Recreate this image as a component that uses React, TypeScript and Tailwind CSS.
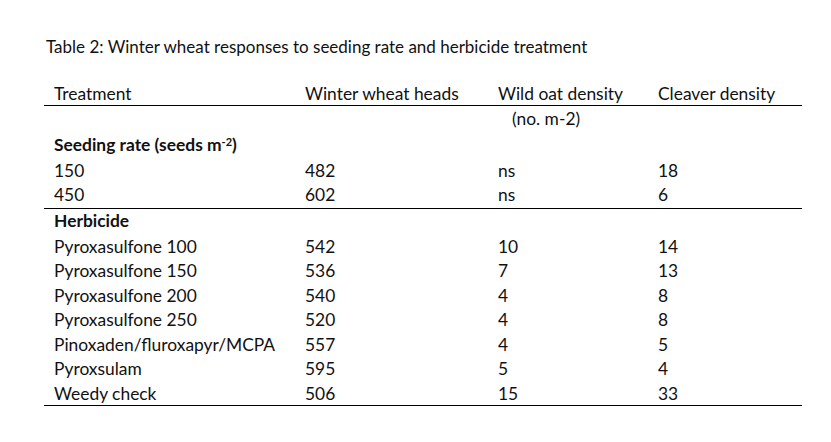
import React from 'react';

type Row = { name: string; heads: string; oat: string; cleaver: string };

const seeding: Row[] = [
  { name: '150', heads: '482', oat: 'ns', cleaver: '18' },
  { name: '450', heads: '602', oat: 'ns', cleaver: '6' },
];

const herbicide: Row[] = [
  { name: 'Pyroxasulfone 100', heads: '542', oat: '10', cleaver: '14' },
  { name: 'Pyroxasulfone 150', heads: '536', oat: '7', cleaver: '13' },
  { name: 'Pyroxasulfone 200', heads: '540', oat: '4', cleaver: '8' },
  { name: 'Pyroxasulfone 250', heads: '520', oat: '4', cleaver: '8' },
  { name: 'Pinoxaden/fluroxapyr/MCPA', heads: '557', oat: '4', cleaver: '5' },
  { name: 'Pyroxsulam', heads: '595', oat: '5', cleaver: '4' },
  { name: 'Weedy check', heads: '506', oat: '15', cleaver: '33' },
];

const cols = 'grid grid-cols-[251px_193px_160px_1fr] pl-[10px]';

const DataRow: React.FC<{ row: Row }> = ({ row }) => (
  <div className={`${cols} h-[24.5px] items-center`}>
    <span>{row.name}</span>
    <span>{row.heads}</span>
    <span>{row.oat}</span>
    <span>{row.cleaver}</span>
  </div>
);

const App: React.FC = () => {
  return (
    <div
      className="w-[831px] h-[442px] bg-white text-[#111] overflow-hidden"
      style={{ fontFamily: 'Lato, "Open Sans", sans-serif' }}
    >
      <div className="pt-[37px] pl-[44px] w-[802px]">
        {/* Caption */}
        <p className="pl-[2px] text-[17px] leading-[20px]">
          Table 2: Winter wheat responses to seeding rate and herbicide treatment
        </p>

        <div className="mt-[24px] text-[17.4px]">
          {/* Header */}
          <div className={`${cols} h-[25px] items-center border-b border-black`}>
            <span>Treatment</span>
            <span>Winter wheat heads</span>
            <span>Wild oat density</span>
            <span>Cleaver density</span>
          </div>
          <div className="h-[26px] flex items-center pl-[468px]">(no. m-2)</div>

          {/* Seeding rate */}
          <div className="h-[24.5px] pl-[10px] mt-[1px] flex items-center font-bold">
            <span>
              Seeding rate (seeds m<sup className="text-[11px]">-2</sup>)
            </span>
          </div>
          <div className="border-b border-black pb-[1px]">
            {seeding.map((r) => (
              <DataRow key={r.name} row={r} />
            ))}
          </div>

          {/* Herbicide */}
          <div className="h-[25px] pl-[10px] pt-[1px] flex items-center font-bold">Herbicide</div>
          <div className="border-b border-black">
            {herbicide.map((r) => (
              <DataRow key={r.name} row={r} />
            ))}
          </div>
        </div>
      </div>
    </div>
  );
};

export default App;
